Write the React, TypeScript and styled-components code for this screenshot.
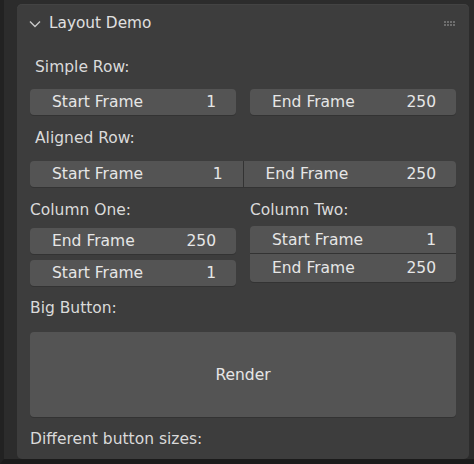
import React from "react";
import styled, { createGlobalStyle, css } from "styled-components";

const GlobalStyle = createGlobalStyle`
  html, body {
    margin: 0;
    padding: 0;
    background: #1c1c1c;
  }
  body {
    font-family: "DejaVu Sans", "Liberation Sans", sans-serif;
    -webkit-font-smoothing: antialiased;
  }
`;

const Region = styled.div`
  width: 474px;
  height: 464px;
  box-sizing: border-box;
  background: #2c2c2c;
  border-left: 4px solid #222222;
  border-bottom: 5px solid #1b1b1b;
  padding: 4px 5px 0 13px;
  overflow: hidden;
`;

const Panel = styled.div`
  height: 455px;
  box-sizing: border-box;
  background: #3d3d3d;
  border-radius: 5px;
  box-shadow: inset 0 1px 0 #434343;
  padding: 0 13px;
  display: flex;
  flex-direction: column;
`;

const Header = styled.div`
  height: 38px;
  display: flex;
  align-items: center;
  color: #e0e0e0;
  font-size: 15.3px;
  margin: 0 -13px;
  padding: 0 13px 0 12px;
`;

const Chevron = styled.svg`
  width: 12px;
  height: 8px;
  margin-right: 8px;
  margin-top: 2px;
`;

const Title = styled.span`
  flex: 1;
`;

const Grip = styled.div`
  display: grid;
  grid-template-columns: repeat(4, 2px);
  grid-auto-rows: 2px;
  gap: 1px;
  margin-right: 1px;

  span {
    background: #6e6e6e;
  }
`;

const Label = styled.div<{ $indent?: number; $top: number }>`
  flex: none;
  height: 26px;
  line-height: 26px;
  margin-top: ${({ $top }) => $top}px;
  padding-left: ${({ $indent }) => $indent ?? 0}px;
  color: #dadada;
  font-size: 15.5px;
  white-space: nowrap;
`;

const Row = styled.div<{ $top: number; $gap: number }>`
  display: flex;
  gap: ${({ $gap }) => $gap}px;
  margin-top: ${({ $top }) => $top}px;
`;

const Columns = styled.div`
  display: flex;
  gap: 14px;
  margin-top: 10px;
`;

const Column = styled.div`
  flex: 1 1 0;
  display: flex;
  flex-direction: column;
`;

const Stack = styled.div<{ $gap: number; $top: number }>`
  display: flex;
  flex-direction: column;
  gap: ${({ $gap }) => $gap}px;
  margin-top: ${({ $top }) => $top}px;
`;

type Join = "none" | "left" | "right" | "top" | "bottom";

const Field = styled.div<{ $join?: Join; $h?: number }>`
  flex: 1 1 0;
  min-width: 0;
  height: ${({ $h }) => $h ?? 26}px;
  min-height: ${({ $h }) => $h ?? 26}px;
  box-sizing: border-box;
  background: #545454;
  border-radius: 4px;
  box-shadow: 0 1px 0 #333333;
  display: flex;
  align-items: center;
  justify-content: space-between;
  padding: 0 20px 0 22px;
  color: #e6e6e6;
  font-size: 15.5px;
  white-space: nowrap;

  ${({ $join }) =>
    $join === "left" &&
    css`
      border-top-right-radius: 0;
      border-bottom-right-radius: 0;
      border-right: 1px solid #333333;
    `}
  ${({ $join }) =>
    $join === "right" &&
    css`
      border-top-left-radius: 0;
      border-bottom-left-radius: 0;
    `}
  ${({ $join }) =>
    $join === "top" &&
    css`
      border-bottom-left-radius: 0;
      border-bottom-right-radius: 0;
      border-bottom: 1px solid #333333;
      box-shadow: none;
    `}
  ${({ $join }) =>
    $join === "bottom" &&
    css`
      border-top-left-radius: 0;
      border-top-right-radius: 0;
    `}
`;

const BigButton = styled.div`
  flex: none;
  margin-top: 11px;
  height: 85px;
  background: #545454;
  border-radius: 4px;
  box-shadow: 0 1px 0 #333333;
  display: flex;
  align-items: center;
  justify-content: center;
  color: #e6e6e6;
  font-size: 15.5px;
`;

interface INumberField {
  label: string;
  value: number;
  join?: Join;
  h?: number;
}

const NumberField: React.FC<INumberField> = ({ label, value, join, h }) => (
  <Field $join={join} $h={h}>
    <span>{label}</span>
    <span>{value}</span>
  </Field>
);

const App: React.FC = () => (
  <>
    <GlobalStyle />
    <Region>
      <Panel>
        <Header>
          <Chevron viewBox="0 0 12 8">
            <path d="M1 1.5 L6 6.5 L11 1.5" fill="none" stroke="#c8c8c8" strokeWidth="1.4" />
          </Chevron>
          <Title>Layout Demo</Title>
          <Grip>
            {Array.from({ length: 8 }).map((_, i) => (
              <span key={i} />
            ))}
          </Grip>
        </Header>

        <Label $top={12} $indent={5}>
          Simple Row:
        </Label>
        <Row $top={9} $gap={14}>
          <NumberField label="Start Frame" value={1} />
          <NumberField label="End Frame" value={250} />
        </Row>

        <Label $top={10} $indent={5}>
          Aligned Row:
        </Label>
        <Row $top={10} $gap={0}>
          <NumberField label="Start Frame" value={1} join="left" />
          <NumberField label="End Frame" value={250} join="right" />
        </Row>

        <Columns>
          <Column>
            <Label $top={0}>Column One:</Label>
            <Stack $gap={6} $top={5}>
              <NumberField label="End Frame" value={250} />
              <NumberField label="Start Frame" value={1} />
            </Stack>
          </Column>
          <Column>
            <Label $top={0}>Column Two:</Label>
            <Stack $gap={0} $top={3}>
              <NumberField label="Start Frame" value={1} join="top" h={28} />
              <NumberField label="End Frame" value={250} join="bottom" h={28} />
            </Stack>
          </Column>
        </Columns>

        <Label $top={9}>Big Button:</Label>
        <BigButton>Render</BigButton>

        <Label $top={9}>Different button sizes:</Label>
      </Panel>
    </Region>
  </>
);

export default App;
